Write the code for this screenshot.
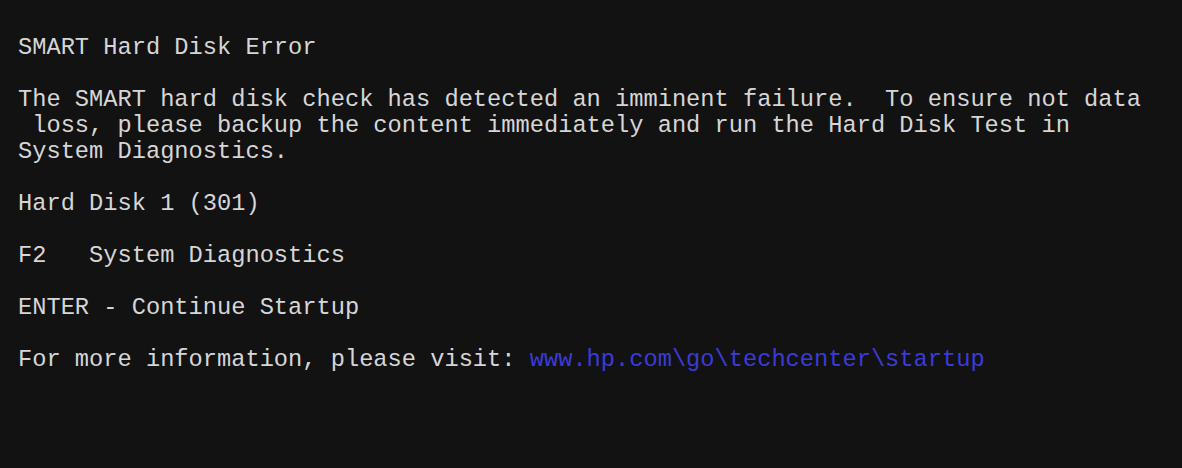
export default function App() {
  const lines: { text: string; link?: string }[] = [
    { text: "SMART Hard Disk Error" },
    { text: "" },
    { text: "The SMART hard disk check has detected an imminent failure.  To ensure not data" },
    { text: " loss, please backup the content immediately and run the Hard Disk Test in" },
    { text: "System Diagnostics." },
    { text: "" },
    { text: "Hard Disk 1 (301)" },
    { text: "" },
    { text: "F2   System Diagnostics" },
    { text: "" },
    { text: "ENTER - Continue Startup" },
    { text: "" },
    { text: "For more information, please visit: ", link: "www.hp.com\\go\\techcenter\\startup" },
  ];

  return (
    <div className="w-[1182px] h-[468px] bg-[#121212] overflow-hidden">
      <div className="pt-[35px] pl-[18px] font-['Liberation_Mono',monospace] text-[23.7px] leading-[26px] text-[#d6d6d6]">
        {lines.map((l, i) => (
          <div key={i} className="whitespace-pre h-[26px]">
            {l.text}
            {l.link && <span className="text-[#3b3bd8]">{l.link}</span>}
          </div>
        ))}
      </div>
    </div>
  );
}
